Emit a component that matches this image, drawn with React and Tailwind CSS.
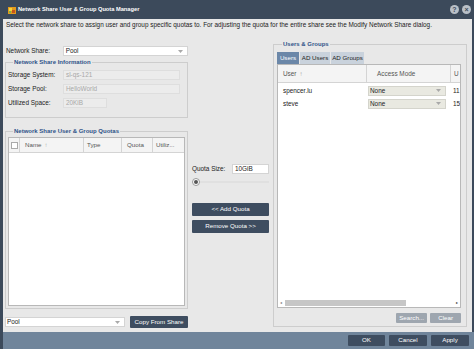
import React from "react";

const Btn = ({ children, className = "" }) => (
  <div className={`flex items-center justify-center text-white text-[6.2px] leading-none rounded-[1px] ${className}`}>{children}</div>
);

const Arrow = () => (
  <svg width="5" height="3" viewBox="0 0 5 3" className="shrink-0"><path d="M0 0 L5 0 L2.5 3 Z" fill="#a9a9a9" /></svg>
);

export default function App() {
  return (
    <div className="w-[474px] h-[349px] bg-[#3c4a5b] flex flex-col overflow-hidden font-['Liberation_Sans',Arial,sans-serif] text-[#222]">
      {/* title bar */}
      <div className="h-[19px] flex items-center pl-[8px] pr-[3px] shrink-0">
        <svg width="8" height="8" viewBox="0 0 8 8" className="shrink-0">
          <rect x="0" y="1" width="8" height="7" fill="#e39a1c" />
          <rect x="1" y="2" width="3" height="3" fill="#f6d33c" />
          <rect x="4" y="4" width="3" height="3" fill="#c6541b" />
          <rect x="1" y="5" width="2" height="2" fill="#7fb24a" />
        </svg>
        <span className="ml-[2px] text-white font-bold text-[5.7px] leading-none">Network Share User &amp; Group Quota Manager</span>
        <div className="ml-auto flex gap-[3px]">
          <div className="w-[9px] h-[9px] rounded-full bg-[#b9c0c8] flex items-center justify-center text-[#3c4a5b] text-[7px] font-bold leading-none">?</div>
          <div className="w-[9px] h-[9px] rounded-full bg-[#b9c0c8] flex items-center justify-center text-[#3c4a5b] text-[7px] font-bold leading-none">×</div>
        </div>
      </div>

      {/* body */}
      <div className="h-[313px] ml-[3px] mr-[2px] bg-[#e8e8e8] flex flex-col shrink-0">
        <div className="mt-[2px] h-[8px] leading-[8px] text-[6.4px] pl-[3px] whitespace-nowrap">
          Select the network share to assign user and group specific quotas to. For adjusting the quota for the entire share see the Modify Network Share dialog.
        </div>
        <div className="flex">
          {/* left column */}
          <div className="ml-[2px] w-[183px] flex flex-col">
            <div className="mt-[17px] h-[10px] flex items-center text-[6.4px]">
              <span className="w-[58px] pl-[1px]">Network Share:</span>
              <div className="w-[126px] h-[10px] bg-white border border-[#d4d4d4] flex items-center pl-[2px] pr-[4px]">
                <span className="flex-1">Pool</span>
                <Arrow />
              </div>
            </div>
            <fieldset className="mt-[2px] h-[60px] border border-[#cdcdcd] px-[2px] pb-[8px]">
              <legend className="ml-[5px] px-[1px] text-[6px] leading-[8px] font-bold text-[#2f5389]">Network Share Information</legend>
              <div className="flex flex-col gap-[4px] pt-[4px] text-[6.4px]">
                <div className="flex items-center h-[10px]">
                  <span className="w-[55px]">Storage System:</span>
                  <div className="w-[117px] h-[10px] border border-[#dedede] bg-[#ececec] text-[#a8a8a8] flex items-center pl-[2px]">sl-qs-121</div>
                </div>
                <div className="flex items-center h-[10px]">
                  <span className="w-[55px]">Storage Pool:</span>
                  <div className="w-[117px] h-[10px] border border-[#dedede] bg-[#ececec] text-[#a8a8a8] flex items-center pl-[2px]">HelloWorld</div>
                </div>
                <div className="flex items-center h-[10px]">
                  <span className="w-[55px]">Utilized Space:</span>
                  <div className="w-[44px] h-[10px] border border-[#dedede] bg-[#ececec] text-[#a8a8a8] flex items-center pl-[2px]">20KiB</div>
                </div>
              </div>
            </fieldset>
            <fieldset className="mt-[9px] h-[182px] border border-[#cdcdcd] px-[2px] pb-[1px] flex flex-col">
              <legend className="ml-[5px] px-[1px] text-[6px] leading-[8px] font-bold text-[#2f5389]">Network Share User &amp; Group Quotas</legend>
              <div className="mt-[2px] h-[169px] bg-white border border-[#b8b8b8] flex flex-col">
                <div className="h-[15px] flex text-[6.2px] text-[#555] border-b border-[#d4d4d4] bg-[#f4f4f4]">
                  <div className="w-[11px] flex items-center justify-center border-r border-[#d4d4d4]">
                    <div className="w-[7px] h-[7px] bg-white border border-[#aaa]" />
                  </div>
                  <div className="w-[64px] flex items-center pl-[5px] border-r border-[#d4d4d4]">Name <span className="ml-[3px] text-[#999]">↑</span></div>
                  <div className="w-[38px] flex items-center pl-[3px] border-r border-[#d4d4d4]">Type</div>
                  <div className="w-[31px] flex items-center pl-[5px] border-r border-[#d4d4d4]">Quota</div>
                  <div className="flex-1 flex items-center pl-[3px]">Utiliz...</div>
                </div>
              </div>
            </fieldset>
            <div className="mt-[7px] flex items-center">
              <div className="w-[120px] h-[10px] bg-white border border-[#d4d4d4] flex items-center pl-[1px] pr-[4px] text-[6.4px]">
                <span className="flex-1">Pool</span>
                <Arrow />
              </div>
              <Btn className="ml-[5px] w-[58px] h-[12px] bg-[#3e4d60]">Copy From Share</Btn>
            </div>
          </div>

          {/* middle column */}
          <div className="ml-[4px] w-[77px] flex flex-col">
            <div className="mt-[135px] flex items-center h-[10px] text-[6.4px]">
              <span className="w-[40px]">Quota Size:</span>
              <div className="w-[37px] h-[10px] bg-white border border-[#d4d4d4] flex items-center pl-[2px]">10GiB</div>
            </div>
            <div className="mt-[4px] h-[8px] flex items-center">
              <div className="w-[8px] h-[8px] rounded-full border border-[#999] bg-white flex items-center justify-center shrink-0">
                <div className="w-[4px] h-[4px] rounded-full bg-[#555]" />
              </div>
              <div className="flex-1 h-[2px] bg-[#f6f6f6] border-y border-[#e0e0e0]" />
            </div>
            <Btn className="mt-[17px] h-[13px] bg-[#3e4d60]">&lt;&lt; Add Quota</Btn>
            <Btn className="mt-[4px] h-[13px] bg-[#3e4d60]">Remove Quota &gt;&gt;</Btn>
          </div>

          {/* right column */}
          <fieldset className="ml-[4px] mt-[11px] w-[193px] h-[287px] border border-[#cdcdcd] pl-[3px] pr-[5px] flex flex-col">
            <legend className="ml-[5px] px-[1px] text-[6px] leading-[8px] font-bold text-[#2f5389]">Users &amp; Groups</legend>
            <div className="mt-[4px] flex gap-[1px] h-[12px] text-[6.2px]">
              <div className="w-[22px] bg-[#6b87a8] text-white flex items-center justify-center">Users</div>
              <div className="w-[30px] bg-[#c9d2dc] flex items-center justify-center">AD Users</div>
              <div className="w-[33px] bg-[#c9d2dc] flex items-center justify-center">AD Groups</div>
            </div>
            <div className="h-[244px] bg-white border border-[#b8b8b8] flex flex-col text-[6.4px] overflow-hidden">
              <div className="h-[18px] flex text-[#555] border-b border-[#d4d4d4] bg-[#f4f4f4] shrink-0">
                <div className="w-[89px] flex items-center pl-[5px] border-r border-[#d4d4d4]">User <span className="ml-[3px] text-[#999]">↑</span></div>
                <div className="w-[84px] flex items-center pl-[10px] border-r border-[#d4d4d4]">Access Mode</div>
                <div className="flex-1 flex items-center pl-[3px]">U</div>
              </div>
              {[["spencer.lu", "11"], ["steve", "15"]].map(([u, v], i) => (
                <div key={u} className={`h-[13px] flex items-center ${i === 0 ? "mt-[1px]" : ""}`}>
                  <div className="w-[89px] pl-[5px]">{u}</div>
                  <div className="w-[84px] pl-[1px]">
                    <div className="w-[78px] h-[10px] bg-[#e9e9e1] border border-[#d4d4cc] flex items-center pl-[1px] pr-[4px]">
                      <span className="flex-1">None</span>
                      <Arrow />
                    </div>
                  </div>
                  <div className="flex-1 pl-[2px]">{v}</div>
                </div>
              ))}
              <div className="flex-1" />
              <div className="h-[8px] flex items-center px-[2px] shrink-0">
                <span className="text-[4px] text-[#777] leading-none">◂</span>
                <div className="ml-[3px] w-[121px] h-[6px] bg-[#c6c6c6]" />
                <div className="flex-1" />
                <span className="text-[4px] text-[#333] leading-none">▸</span>
              </div>
            </div>
            <div className="mt-[5px] flex justify-end gap-[3px]">
              <Btn className="w-[31px] h-[10px] bg-[#9ea6af]">Search...</Btn>
              <Btn className="w-[31px] h-[10px] bg-[#9ea6af]">Clear</Btn>
            </div>
          </fieldset>
        </div>
      </div>

      {/* bottom bar */}
      <div className="h-[17px] ml-[3px] bg-[#70859b] flex items-center justify-end gap-[4px] pr-[5px] shrink-0">
        <Btn className="w-[37px] h-[11px] bg-[#3e4d60]">OK</Btn>
        <Btn className="w-[38px] h-[11px] bg-[#3e4d60]">Cancel</Btn>
        <Btn className="w-[38px] h-[11px] bg-[#3e4d60]">Apply</Btn>
      </div>
    </div>
  );
}
